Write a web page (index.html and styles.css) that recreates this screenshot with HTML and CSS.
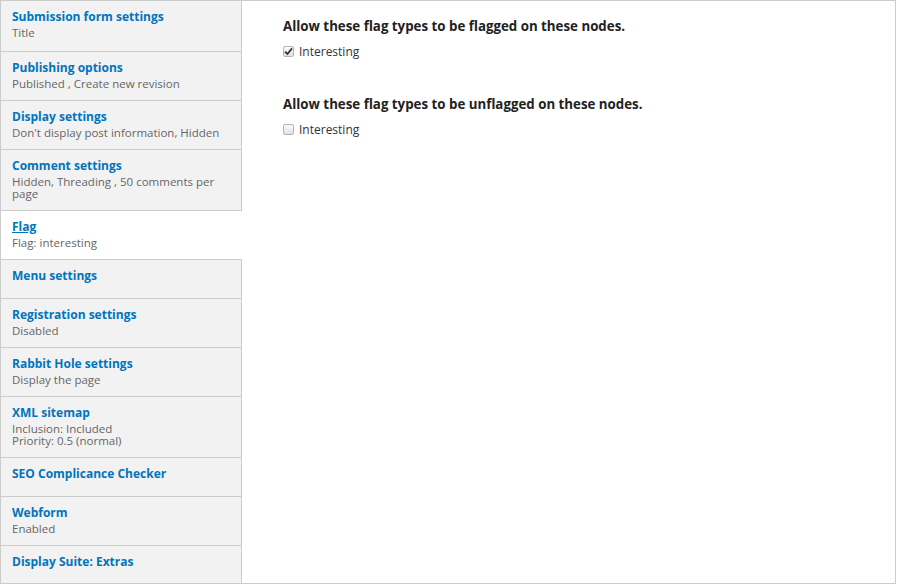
FILE: index.html
```html
<!DOCTYPE html>
<html lang="en">
<head>
<meta charset="UTF-8" />
<title>Node edit - vertical tabs</title>
<link rel="stylesheet" href="styles.css">
</head>
<body>

<div class="vertical-tabs">
  <ul class="tabs-menu">
    <li class="tab"><a href="#">Submission form settings</a><div class="summary">Title</div></li>
    <li class="tab"><a href="#">Publishing options</a><div class="summary">Published , Create new revision</div></li>
    <li class="tab"><a href="#">Display settings</a><div class="summary">Don't display post information, Hidden</div></li>
    <li class="tab"><a href="#">Comment settings</a><div class="summary">Hidden, Threading , 50 comments per page</div></li>
    <li class="tab selected"><a href="#">Flag</a><div class="summary">Flag: interesting</div></li>
    <li class="tab"><a href="#">Menu settings</a><div class="summary"></div></li>
    <li class="tab"><a href="#">Registration settings</a><div class="summary">Disabled</div></li>
    <li class="tab"><a href="#">Rabbit Hole settings</a><div class="summary">Display the page</div></li>
    <li class="tab"><a href="#">XML sitemap</a><div class="summary">Inclusion: Included<br>Priority: 0.5 (normal)</div></li>
    <li class="tab"><a href="#">SEO Complicance Checker</a><div class="summary"></div></li>
    <li class="tab"><a href="#">Webform</a><div class="summary">Enabled</div></li>
    <li class="tab"><a href="#">Display Suite: Extras</a><div class="summary"></div></li>
  </ul>

  <div class="tab-pane">
    <div class="form-item">
      <h4>Allow these flag types to be flagged on these nodes.</h4>
      <label class="check">
        <span class="box checked">
          <svg width="9" height="9" viewBox="0 0 9 9"><path d="M1 4.6 L3.4 7 L8 1.4" fill="none" stroke="#333" stroke-width="1.8"/></svg>
        </span>
        Interesting
      </label>
    </div>
    <div class="form-item">
      <h4>Allow these flag types to be unflagged on these nodes.</h4>
      <label class="check">
        <span class="box"></span>
        Interesting
      </label>
    </div>
  </div>
</div>

</body>
</html>
```

FILE: styles.css
```css
* {
  margin: 0; padding: 0; box-sizing: border-box;
}
body {
  background: #fff;
  font-family: 'Open Sans', 'Noto Sans', sans-serif;
  color: #333;
}
.vertical-tabs {
  display: flex;
  width: 896px;
  height: 584px;
  border: 1px solid #ccc;
}
.tabs-menu {
  list-style: none;
  width: 241px;
  flex-shrink: 0;
  background: #f2f2f2;
  border-right: 1px solid #ccc;
}
.tab {
  padding: 7px 11px 10px;
  border-bottom: 1px solid #ccc;
}
.tab:first-child {
  padding-bottom: 12px;
}
.tab a {
  display: block;
  line-height: 18px;
  font-size: 12px;
  font-weight: 700;
  color: #0074bd;
  text-decoration: none;
}
.tab.selected {
  background: #fff;
  margin-right: -1px;
}
.tab.selected a {
  text-decoration: underline;
}
.summary {
  margin-top: 1px;
  font-size: 11.5px;
  line-height: 12px;
  color: #666;
}
.summary:empty {
  height: 2px;
}
.tab-pane {
  flex: 1;
  padding: 16px 41px;
}
.form-item {
  margin-bottom: 35px;
}
h4 {
  font-size: 13.3px;
  font-weight: 700;
  line-height: 18px;
  color: #222;
  margin-bottom: 8px;
}
.check {
  display: flex;
  align-items: center;
  gap: 5px;
  font-size: 12px;
  color: #333;
}
.box {
  width: 11px;
  height: 11px;
  border: 1px solid #b4b4b4;
  border-radius: 2px;
  background: linear-gradient(#fafafa, #e2e2e2);
  display: flex;
  align-items: center;
  justify-content: center;
}
```
